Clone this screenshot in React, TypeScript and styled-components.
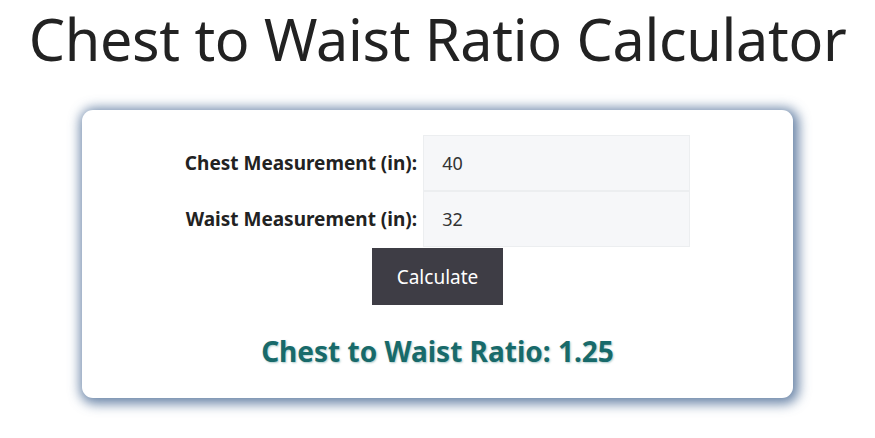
import React, { useState } from 'react';
import styled, { createGlobalStyle } from 'styled-components';

const GlobalStyle = createGlobalStyle`
  html, body {
    margin: 0;
    padding: 0;
    background: #ffffff;
    font-family: "Noto Sans", "Open Sans", Arial, sans-serif;
    color: #212529;
  }
`;

const Page = styled.div`
  display: flex;
  flex-direction: column;
  align-items: center;
  padding-bottom: 40px;
`;

const Title = styled.h1`
  margin: 0;
  font-size: 57.5px;
  font-weight: 400;
  line-height: 78px;
  color: #222;
  letter-spacing: -0.3px;
`;

const Card = styled.div`
  margin-top: 32px;
  width: 711px;
  height: 288px;
  box-sizing: border-box;
  background: #fff;
  border-radius: 11px;
  box-shadow: 2px 2px 12px 4px rgba(60, 95, 140, 0.75);
  display: flex;
  flex-direction: column;
  align-items: center;
  padding-top: 25px;
`;

const Form = styled.table`
  border-collapse: collapse;
`;

const Label = styled.td`
  text-align: right;
  font-weight: 700;
  font-size: 19px;
  color: #222;
  padding: 0 6px 0 0;
  white-space: nowrap;
`;

const Cell = styled.td`
  padding: 0;
`;

const Input = styled.input`
  display: block;
  width: 267px;
  height: 56px;
  box-sizing: border-box;
  background: #f6f7f9;
  border: 1px solid #eceef0;
  padding: 0 18px;
  font-family: inherit;
  font-size: 18px;
  color: #333;
  outline: none;
`;

const Button = styled.button`
  margin-top: 1px;
  width: 131px;
  height: 57px;
  background: #3e3d45;
  color: #fff;
  border: none;
  font-family: inherit;
  font-size: 19px;
  cursor: pointer;
`;

const Result = styled.div`
  margin-top: 27px;
  font-size: 28px;
  font-weight: 700;
  color: #186a6a;
  text-shadow: 1px 1px 2px rgba(24, 106, 106, 0.35);
`;

export default function App() {
  const [chest, setChest] = useState('40');
  const [waist, setWaist] = useState('32');
  const [ratio, setRatio] = useState('1.25');

  const calculate = () => {
    const c = parseFloat(chest);
    const w = parseFloat(waist);
    if (c > 0 && w > 0) setRatio((c / w).toFixed(2));
  };

  return (
    <>
      <GlobalStyle />
      <Page>
        <Title>Chest to Waist Ratio Calculator</Title>
        <Card>
          <Form>
            <tbody>
              <tr>
                <Label>Chest Measurement (in):</Label>
                <Cell>
                  <Input value={chest} onChange={e => setChest(e.target.value)} />
                </Cell>
              </tr>
              <tr>
                <Label>Waist Measurement (in):</Label>
                <Cell>
                  <Input value={waist} onChange={e => setWaist(e.target.value)} />
                </Cell>
              </tr>
            </tbody>
          </Form>
          <Button onClick={calculate}>Calculate</Button>
          <Result>Chest to Waist Ratio: {ratio}</Result>
        </Card>
      </Page>
    </>
  );
}
